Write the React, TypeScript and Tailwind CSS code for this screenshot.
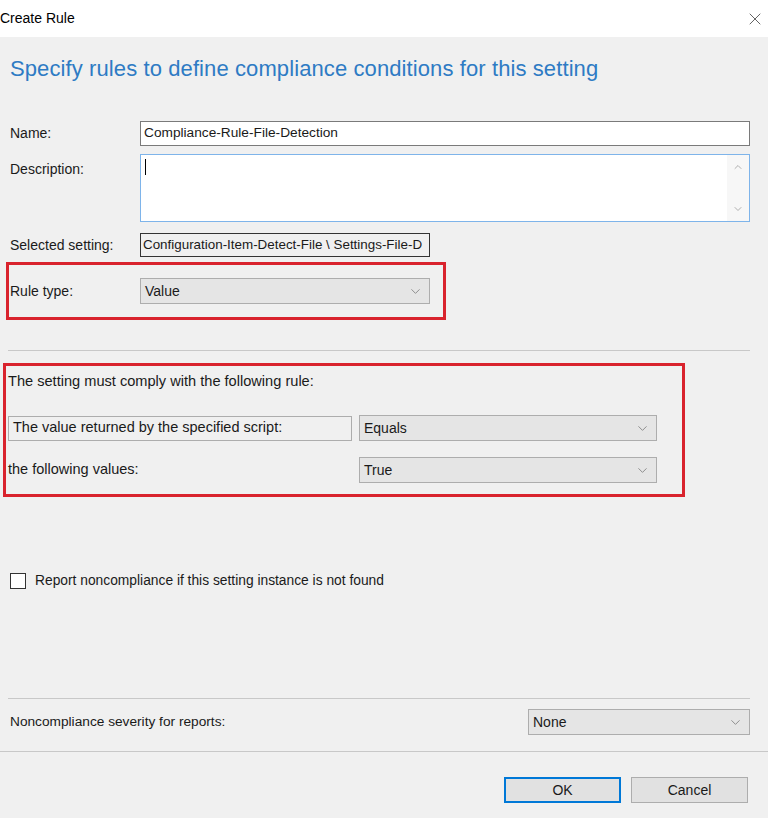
import { ChevronDown, ChevronUp, X } from 'lucide-react'

function Select({ value, className }: { value: string; className: string }) {
  return (
    <div
      className={`flex items-center justify-between bg-[#e5e5e5] border border-[#adadad] pl-[4px] pr-[6px] text-[14px] text-[#1a1a1a] ${className}`}
    >
      <span>{value}</span>
      <ChevronDown className="h-[15px] w-[15px] text-[#707070]" strokeWidth={1.2} />
    </div>
  )
}

export default function App() {
  return (
    <div
      className="w-[768px] h-[818px] bg-[#f0f0f0] text-[#1a1a1a] overflow-hidden"
      style={{ fontFamily: '"Liberation Sans", Arial, sans-serif' }}
    >
      {/* Title bar */}
      <div className="h-[37px] bg-white flex items-center justify-between pr-[3px]">
        <span className="text-[14px] text-black">Create Rule</span>
        <X className="h-[20px] w-[20px] text-[#444]" strokeWidth={1} />
      </div>

      {/* Heading */}
      <div className="h-[62px] flex items-center pl-[10px]">
        <h1 className="text-[22px] text-[#2e7bc4] tracking-[0.1px]">
          Specify rules to define compliance conditions for this setting
        </h1>
      </div>

      {/* Fields */}
      <div className="mt-[22px] flex items-center h-[25px]">
        <span className="w-[140px] pl-[10px] text-[14px]">Name:</span>
        <div className="w-[610px] h-[25px] bg-white border border-[#7a7a7a] flex items-center pl-[3px] text-[13.7px]">
          Compliance-Rule-File-Detection
        </div>
      </div>

      <div className="mt-[8px] flex items-start h-[68px]">
        <span className="w-[140px] pl-[10px] pt-[5px] text-[14px]">Description:</span>
        <div className="w-[610px] h-[68px] bg-white border border-[#7eb4ea] flex">
          <div className="flex-1 pl-[4px] pt-[4px]">
            <div className="w-px h-[16px] bg-black" />
          </div>
          <div className="w-[22px] bg-[#f7f7f7] flex flex-col items-center justify-between py-[6px]">
            <ChevronUp className="h-[12px] w-[12px] text-[#b0b0b0]" />
            <ChevronDown className="h-[12px] w-[12px] text-[#b0b0b0]" />
          </div>
        </div>
      </div>

      <div className="mt-[11px] flex items-center h-[24px]">
        <span className="w-[140px] pl-[10px] text-[14px]">Selected setting:</span>
        <div className="w-[290px] h-[24px] border border-[#333] flex items-center pl-[2px] text-[13.4px] overflow-hidden whitespace-nowrap">
          Configuration-Item-Detect-File \ Settings-File-D
        </div>
      </div>

      {/* Rule type box */}
      <div className="mt-[5px] ml-[6px] w-[440px] h-[58px] border-[3px] border-[#d9232d] flex items-center">
        <span className="w-[131px] pl-[1px] text-[14px]">Rule type:</span>
        <Select value="Value" className="w-[290px] h-[26px]" />
      </div>

      {/* Separator */}
      <div className="mt-[30px] ml-[8px] mr-[18px] h-[2px] border-t border-[#c8c8c8] border-b-white" />

      {/* Rule box */}
      <div className="mt-[11px] ml-[3px] w-[682px] h-[134px] border-[3px] border-[#d9232d] px-[2px] pt-[6px]">
        <div className="h-[20px] flex items-center text-[14.6px]">
          The setting must comply with the following rule:
        </div>
        <div className="mt-[23px] flex items-center gap-[7px]">
          <div className="w-[344px] h-[25px] border border-[#adadad] flex items-center pl-[4px] text-[14.5px]">
            The value returned by the specified script:
          </div>
          <Select value="Equals" className="w-[298px] h-[26px]" />
        </div>
        <div className="mt-[16px] flex items-center">
          <span className="w-[351px] text-[14.5px]">the following values:</span>
          <Select value="True" className="w-[298px] h-[26px]" />
        </div>
      </div>

      {/* Checkbox */}
      <div className="mt-[76px] flex items-center pl-[10px] gap-[9px] h-[16px]">
        <div className="w-[16px] h-[16px] bg-white border border-[#333]" />
        <span className="text-[13.8px]">Report noncompliance if this setting instance is not found</span>
      </div>

      {/* Separator */}
      <div className="mt-[109px] ml-[8px] mr-[18px] h-[2px] border-t border-[#c8c8c8] border-b-white" />

      <div className="mt-[9px] flex items-center justify-between pl-[10px] pr-[18px]">
        <span className="text-[13.7px]">Noncompliance severity for reports:</span>
        <Select value="None" className="w-[222px] h-[26px]" />
      </div>

      <div className="mt-[16px] h-[2px] border-t border-[#c8c8c8]" />

      {/* Buttons */}
      <div className="mt-[24px] flex justify-end gap-[10px] pr-[20px]">
        <button className="w-[117px] h-[26px] bg-[#e1e1e1] border-2 border-[#0078d7] text-[14px]">
          OK
        </button>
        <button className="w-[117px] h-[26px] bg-[#e1e1e1] border border-[#adadad] text-[14px]">
          Cancel
        </button>
      </div>
    </div>
  )
}
